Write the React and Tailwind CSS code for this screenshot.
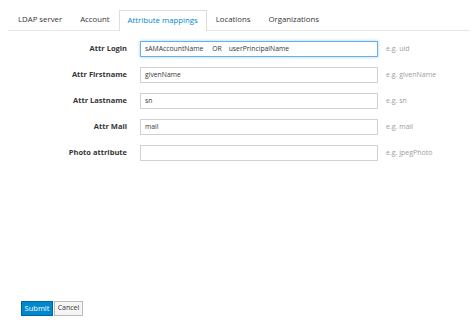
const tabs = ["LDAP server", "Account", "Attribute mappings", "Locations", "Organizations"];

const fields = [
  { label: "Attr Login", value: "sAMAccountName     OR    userPrincipalName", help: "e.g. uid", focus: true },
  { label: "Attr Firstname", value: "givenName", help: "e.g. givenName" },
  { label: "Attr Lastname", value: "sn", help: "e.g. sn" },
  { label: "Attr Mail", value: "mail", help: "e.g. mail" },
  { label: "Photo attribute", value: "", help: "e.g. jpegPhoto" },
];

const App = () => {
  return (
    <div className="w-[474px] h-[330px] bg-white text-[#363636] font-['Open_Sans',sans-serif] text-[7.5px] flex flex-col">
      {/* tabs */}
      <div className="mt-[10px] ml-[8px] mr-[4px] flex border-b border-[#e6e6e6] h-[21px] text-[7.8px]">
        {tabs.map((t, i) =>
          i === 2 ? (
            <div key={t} className="px-[8px] flex items-center border border-b-0 border-[#ddd] bg-white text-[#0088ce] -mb-px">
              {t}
            </div>
          ) : (
            <div key={t} className={`flex items-center ${i === 0 ? "pl-[10px] pr-[9px]" : "px-[9px]"}`}>
              {t}
            </div>
          )
        )}
      </div>

      {/* form */}
      <div className="mt-[10px] flex flex-col gap-[10px]">
        {fields.map((f) => (
          <div key={f.label} className="flex items-center h-[16px]">
            <label className="w-[127px] text-right font-bold">{f.label}</label>
            <div
              className={`ml-[13px] w-[238px] h-[16px] flex items-center px-[4px] border bg-white text-[6.8px] ${
                f.focus ? "border-[#66afe9] shadow-[0_0_3px_rgba(102,175,233,0.6)]" : "border-[#d1d1d1]"
              }`}
            >
              <span className="whitespace-pre">{f.value}</span>
            </div>
            <span className="ml-[8px] text-[#9c9c9c] text-[7px]">{f.help}</span>
          </div>
        ))}
      </div>

      <div className="mt-auto mb-[14px] ml-[21px] flex gap-[1px]">
        <button className="w-[32px] h-[15px] flex items-center justify-center bg-[#0088ce] border border-[#00659c] text-white text-[7.5px]">Submit</button>
        <button className="w-[29px] h-[15px] flex items-center justify-center bg-[#f5f5f5] border border-[#bbb] text-[#363636] text-[7px]">Cancel</button>
      </div>
    </div>
  );
};

export default App;
